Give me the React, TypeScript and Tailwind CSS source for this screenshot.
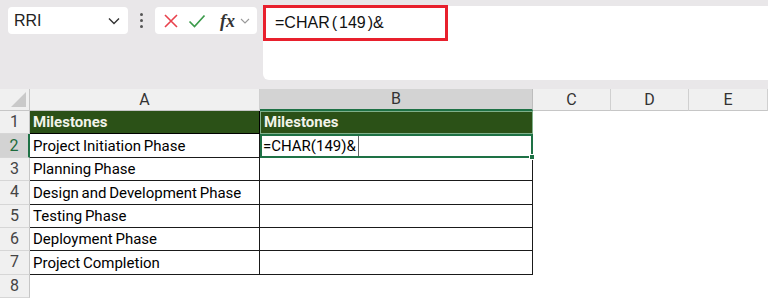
import React from 'react';

const milestones = [
  'Project Initiation Phase',
  'Planning Phase',
  'Design and Development Phase',
  'Testing Phase',
  'Deployment Phase',
  'Project Completion',
];

const cols = ['A', 'B', 'C', 'D', 'E'];

const RowHead: React.FC<{ n: number; active?: boolean }> = ({ n, active }) => (
  <div
    className={`flex items-center justify-center text-[16px] border-b border-[#d6d6d6] ${
      active ? 'bg-[#d3d3d3] text-[#1d6b3c] border-r-2 border-r-[#1e7145]' : 'bg-[#f0f0f0] text-[#444] border-r border-r-[#c6c6c6]'
    }`}
  >
    {n}
  </div>
);

const App: React.FC = () => {
  return (
    <div className="w-[768px] h-[298px] overflow-hidden bg-white text-[15px] text-black font-['Liberation_Sans',Arial,sans-serif]">
      {/* formula bar */}
      <div className="h-[89px] bg-[#e9e7e9] flex items-start pt-[6px]">
        <div className="ml-[8px] mt-[1px] w-[120px] h-[27px] bg-white rounded-[4px] flex items-center justify-between pl-[6px] pr-[8px]">
          <span className="text-[16px] text-[#222]">RRI</span>
          <svg width="12" height="8" viewBox="0 0 12 8" fill="none" stroke="#333" strokeWidth="1.4">
            <path d="M1 1.5 L6 6.5 L11 1.5" />
          </svg>
        </div>
        <div className="w-[27px] h-[28px] flex flex-col items-center justify-center gap-[3px]">
          <span className="w-[3px] h-[3px] rounded-full bg-[#555]" />
          <span className="w-[3px] h-[3px] rounded-full bg-[#555]" />
          <span className="w-[3px] h-[3px] rounded-full bg-[#555]" />
        </div>
        <div className="mt-[1px] w-[102px] h-[27px] bg-white rounded-[4px] flex items-center pl-[8px]">
          <svg width="16" height="16" viewBox="0 0 16 16" fill="none" stroke="#e8414c" strokeWidth="1.6">
            <path d="M2 2 L14 14 M14 2 L2 14" />
          </svg>
          <svg className="ml-[9px]" width="18" height="16" viewBox="0 0 18 16" fill="none" stroke="#3c9b4b" strokeWidth="1.7">
            <path d="M1.5 8.5 L6.5 13.5 L16.5 2.5" />
          </svg>
          <span className="ml-[14px] font-['Liberation_Serif',serif] italic text-[18px] font-bold text-[#333] leading-none">
            fx
          </span>
          <svg className="ml-[5px]" width="10" height="6" viewBox="0 0 10 6" fill="none" stroke="#999" strokeWidth="1.1">
            <path d="M1 1 L5 5 L9 1" />
          </svg>
        </div>
        <div className="ml-[6px] flex-1 h-[74px] bg-white rounded-l-[6px]">
          <div className="-mt-[1px] w-[185px] h-[36px] border-[3px] border-[#e8202d] flex items-center pl-[9px] text-[16px] text-[#111]">
            =CHAR<span className="mx-[2px]">(</span>149<span className="ml-[2px]">)</span>&amp;
          </div>
        </div>
      </div>

      {/* grid */}
      <div className="grid grid-cols-[30px_230px_273px_78px_78px_79px] grid-rows-[22px_repeat(8,23.375px)] font-['Roboto',sans-serif] text-[15px] [word-spacing:-1px]">
        <div className="bg-[#f0f0f0] border-r border-b border-[#c6c6c6] relative">
          <div className="absolute right-[3px] bottom-[3px] w-0 h-0 border-l-[15px] border-l-transparent border-b-[15px] border-b-[#c9c9c9]" />
        </div>
        {cols.map((c) => (
          <div
            key={c}
            className={`flex items-center justify-center text-[16px] text-[#333] border-r ${
              c === 'B'
                ? 'bg-[#d3d3d3] border-r-[#bdbdbd] border-b-2 border-b-[#1e7145]'
                : 'bg-[#f0f0f0] border-r-[#d0d0d0] border-b border-b-[#c6c6c6]'
            }`}
          >
            {c}
          </div>
        ))}

        {/* row 1 */}
        <RowHead n={1} />
        <div className="bg-[#2b5117] text-[#f2f4ea] font-bold flex items-center pl-[3px] pt-[1px] border-r border-b border-black">
          Milestones
        </div>
        <div className="bg-[#2b5117] text-[#f2f4ea] font-bold flex items-center pl-[3px] border border-[#7fb08a]">
          Milestones
        </div>
        <div />
        <div />
        <div />

        {milestones.map((m, i) => {
          const row = i + 2;
          const active = row === 2;
          return (
            <React.Fragment key={m}>
              <RowHead n={row} active={active} />
              <div className="flex items-center pl-[3px] pt-[1px] border-r border-b border-[#1a1a1a] whitespace-nowrap">{m}</div>
              {active ? (
                <div className="relative flex items-center border-2 border-[#1e7145]">
                  <span className="pl-[1px] pr-[2px] h-full flex items-center border-r border-[#666]">=CHAR(149)&amp;</span>
                  <div className="absolute -right-[4px] -bottom-[4px] w-[6px] h-[6px] bg-[#1e7145] border border-white" />
                </div>
              ) : (
                <div className="border-r border-b border-[#1a1a1a]" />
              )}
              <div />
              <div />
              <div />
            </React.Fragment>
          );
        })}

        <RowHead n={8} />
        <div />
        <div />
        <div />
        <div />
        <div />
      </div>
    </div>
  );
};

export default App;
